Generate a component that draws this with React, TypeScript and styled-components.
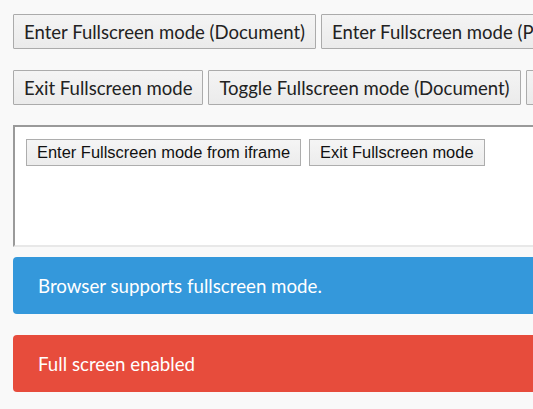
import React from "react";
import styled, { createGlobalStyle } from "styled-components";

const Global = createGlobalStyle`
  html, body { margin: 0; padding: 0; background: #f9f9f9; overflow: hidden; }
  body { font-family: Lato, "Open Sans", sans-serif; }
`;

const Page = styled.div`
  width: 760px;
  padding: 14px 0 0 13px;
  display: flex;
  flex-direction: column;
`;

const ButtonRow = styled.div<{ $mb: number }>`
  display: flex;
  flex-wrap: nowrap;
  gap: 5px;
  margin-bottom: ${(p) => p.$mb}px;
`;

const Button = styled.button`
  flex: none;
  height: 35px;
  padding: 0 10px;
  font-family: Lato, sans-serif;
  font-size: 18.55px;
  color: #222;
  background: linear-gradient(#f4f4f4, #ebebeb);
  border: 1px solid #ababab;
  border-radius: 1px;
  white-space: nowrap;
`;

const Frame = styled.div`
  box-sizing: border-box;
  height: 122px;
  background: #fff;
  border-style: solid;
  border-width: 2px;
  border-color: #9a9a9a #e8e8e8 #e8e8e8 #9a9a9a;
  padding: 12px 0 0 11px;
  display: flex;
  gap: 8px;
  align-items: flex-start;
  margin-bottom: 10px;
`;

const FrameButton = styled.button`
  flex: none;
  height: 27px;
  padding: 0 10px;
  font-family: "Liberation Sans", Arial, sans-serif;
  font-size: 16.45px;
  color: #111;
  background: linear-gradient(#f5f5f5, #ececec);
  border: 1px solid #adadad;
  border-radius: 0;
  white-space: nowrap;
`;

const Alert = styled.div<{ $bg: string }>`
  height: 57px;
  box-sizing: border-box;
  display: flex;
  align-items: center;
  padding: 0 25px;
  border-radius: 4px;
  background: ${(p) => p.$bg};
  color: #fff;
  font-family: Lato, sans-serif;
  font-size: 18.7px;
  margin-bottom: 21px;
`;

export default function App() {
  return (
    <>
      <Global />
      <Page>
        <ButtonRow $mb={21}>
          <Button>Enter Fullscreen mode (Document)</Button>
          <Button>Enter Fullscreen mode (Page)</Button>
        </ButtonRow>
        <ButtonRow $mb={20}>
          <Button>Exit Fullscreen mode</Button>
          <Button>Toggle Fullscreen mode (Document)</Button>
          <Button>Toggle Fullscreen mode (Page)</Button>
        </ButtonRow>
        <Frame>
          <FrameButton>Enter Fullscreen mode from iframe</FrameButton>
          <FrameButton>Exit Fullscreen mode</FrameButton>
        </Frame>
        <Alert $bg="#3498db">Browser supports fullscreen mode.</Alert>
        <Alert $bg="#e74c3c">Full screen enabled</Alert>
      </Page>
    </>
  );
}
